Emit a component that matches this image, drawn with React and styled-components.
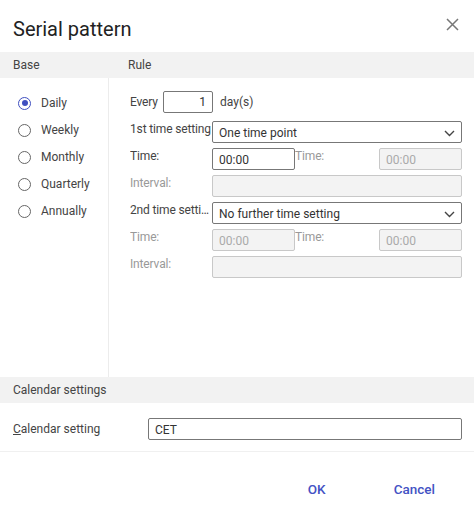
import React from "react";
import styled, { createGlobalStyle } from "styled-components";

const Global = createGlobalStyle`
  html, body { margin: 0; padding: 0; background: #fff; }
  body { font-family: Roboto, "Liberation Sans", Arial, sans-serif; color: #333; }
  * { box-sizing: border-box; }
`;

const Dialog = styled.div`
  width: 474px;
  height: 512px;
  display: flex;
  flex-direction: column;
  background: #fff;
`;

const TitleBar = styled.div`
  height: 52px;
  display: flex;
  align-items: center;
  justify-content: space-between;
  padding: 6px 14px 0 13px;
`;

const Title = styled.h1`
  margin: 0;
  font-size: 20px;
  font-weight: 400;
  color: #222;
`;

const CloseButton = styled.button`
  border: 0;
  background: none;
  padding: 0;
  width: 16px;
  height: 16px;
  display: flex;
  align-items: center;
  justify-content: center;
  margin-top: -10px;
`;

const Band = styled.div`
  height: 26px;
  background: #f2f2f2;
  display: flex;
  align-items: center;
  font-size: 12px;
  color: #444;
`;

const BandCell = styled.div`
  width: ${(p) => p.$w || "auto"};
  padding-left: ${(p) => p.$pl || "13px"};
`;

const Main = styled.div`
  height: 299px;
  display: flex;
`;

const LeftCol = styled.div`
  width: 109px;
  border-right: 1px solid #ececec;
  padding: 14px 0 0 18px;
  display: flex;
  flex-direction: column;
  gap: 5px;
`;

const RadioRow = styled.label`
  height: 22px;
  display: flex;
  align-items: center;
  gap: 10px;
  font-size: 12px;
  color: #444;
`;

const RadioCircle = styled.span`
  width: 13px;
  height: 13px;
  border-radius: 50%;
  border: 1.3px solid ${(p) => (p.$on ? "#3f4fc0" : "#666")};
  display: flex;
  align-items: center;
  justify-content: center;
  &::after {
    content: "";
    width: 6px;
    height: 6px;
    border-radius: 50%;
    background: ${(p) => (p.$on ? "#3f4fc0" : "transparent")};
  }
`;

const RightCol = styled.div`
  flex: 1;
  padding: 13px 12px 0 21px;
  display: flex;
  flex-direction: column;
  gap: 5px;
`;

const Row = styled.div`
  height: 22px;
  display: flex;
  align-items: ${(p) => (p.$center ? "center" : "flex-start")};
  margin-bottom: ${(p) => p.$mb || "0"};
`;

const Label = styled.span`
  width: ${(p) => p.$w || "82px"};
  flex: none;
  font-size: 12px;
  line-height: 14px;
  letter-spacing: -0.15px;
  padding-top: ${(p) => (p.$center ? "0" : "1px")};
  color: ${(p) => (p.$disabled ? "#999" : "#444")};
  white-space: nowrap;
  overflow: ${(p) => (p.$fit ? "visible" : "hidden")};
  text-overflow: ellipsis;
  padding-right: 2px;
`;

const Input = styled.div`
  width: ${(p) => p.$w || "auto"};
  flex: ${(p) => (p.$w ? "none" : "1")};
  height: 22px;
  border: 1px solid ${(p) => (p.$disabled ? "#c8c8c8" : "#777")};
  background: ${(p) => (p.$disabled ? "#f3f3f3" : "#fff")};
  border-radius: 2px;
  display: flex;
  align-items: center;
  justify-content: ${(p) => (p.$right ? "flex-end" : "space-between")};
  padding: ${(p) => (p.$right ? "0 6px 0 6px" : "2px 6px 0 6px")};
  font-size: 12px;
  color: ${(p) => (p.$disabled ? "#aaa" : "#333")};
`;

const After = styled.span`
  font-size: 12px;
  color: #444;
  margin-left: 7px;
`;

const CalRow = styled.div`
  height: 49px;
  display: flex;
  align-items: center;
  padding: 3px 12px 0 13px;
  border-bottom: 1px solid #f0f0f0;
`;

const CalLabel = styled.span`
  width: 135px;
  font-size: 12px;
  color: #444;
  u { text-decoration: underline; }
`;

const Footer = styled.div`
  flex: 1;
  display: flex;
  justify-content: flex-end;
  align-items: center;
  padding: 13px 23px 0 0;
  gap: 29px;
`;

const TextButton = styled.button`
  border: 0;
  background: none;
  padding: 0 16px;
  min-width: 64px;
  font-family: Roboto, "Liberation Sans", Arial, sans-serif;
  font-size: 13.5px;
  font-weight: 500;
  color: #4352c4;
`;

const Chevron = () => (
  <svg width="11" height="7" viewBox="0 0 11 7">
    <path d="M1 1l4.5 4.5L10 1" fill="none" stroke="#444" strokeWidth="1.4" />
  </svg>
);

const options = ["Daily", "Weekly", "Monthly", "Quarterly", "Annually"];

export default function App() {
  return (
    <Dialog>
      <Global />
      <TitleBar>
        <Title>Serial pattern</Title>
        <CloseButton aria-label="close">
          <svg width="13" height="13" viewBox="0 0 13 13">
            <path d="M1 1l11 11M12 1L1 12" stroke="#777" strokeWidth="1.5" />
          </svg>
        </CloseButton>
      </TitleBar>
      <Band>
        <BandCell $w="108px">Base</BandCell>
        <BandCell $pl="20px">Rule</BandCell>
      </Band>
      <Main>
        <LeftCol>
          {options.map((o, i) => (
            <RadioRow key={o}>
              <RadioCircle $on={i === 0} />
              {o}
            </RadioRow>
          ))}
        </LeftCol>
        <RightCol>
          <Row $center $mb="3px">
            <Label $w="33px" $center>Every</Label>
            <Input $w="50px" $right>1</Input>
            <After>day(s)</After>
          </Row>
          <Row>
            <Label $fit>1st time setting</Label>
            <Input>
              One time point
              <Chevron />
            </Input>
          </Row>
          <Row>
            <Label>Time:</Label>
            <Input $w="83px">00:00</Input>
            <Label $disabled $w="84px">Time:</Label>
            <Input $disabled>00:00</Input>
          </Row>
          <Row>
            <Label $disabled>Interval:</Label>
            <Input $disabled />
          </Row>
          <Row>
            <Label>2nd time setting</Label>
            <Input>
              No further time setting
              <Chevron />
            </Input>
          </Row>
          <Row>
            <Label $disabled>Time:</Label>
            <Input $w="83px" $disabled>00:00</Input>
            <Label $disabled $w="84px">Time:</Label>
            <Input $disabled>00:00</Input>
          </Row>
          <Row>
            <Label $disabled>Interval:</Label>
            <Input $disabled />
          </Row>
        </RightCol>
      </Main>
      <Band>
        <BandCell>Calendar settings</BandCell>
      </Band>
      <CalRow>
        <CalLabel>
          <u>C</u>alendar setting
        </CalLabel>
        <Input>CET</Input>
      </CalRow>
      <Footer>
        <TextButton>OK</TextButton>
        <TextButton>Cancel</TextButton>
      </Footer>
    </Dialog>
  );
}
